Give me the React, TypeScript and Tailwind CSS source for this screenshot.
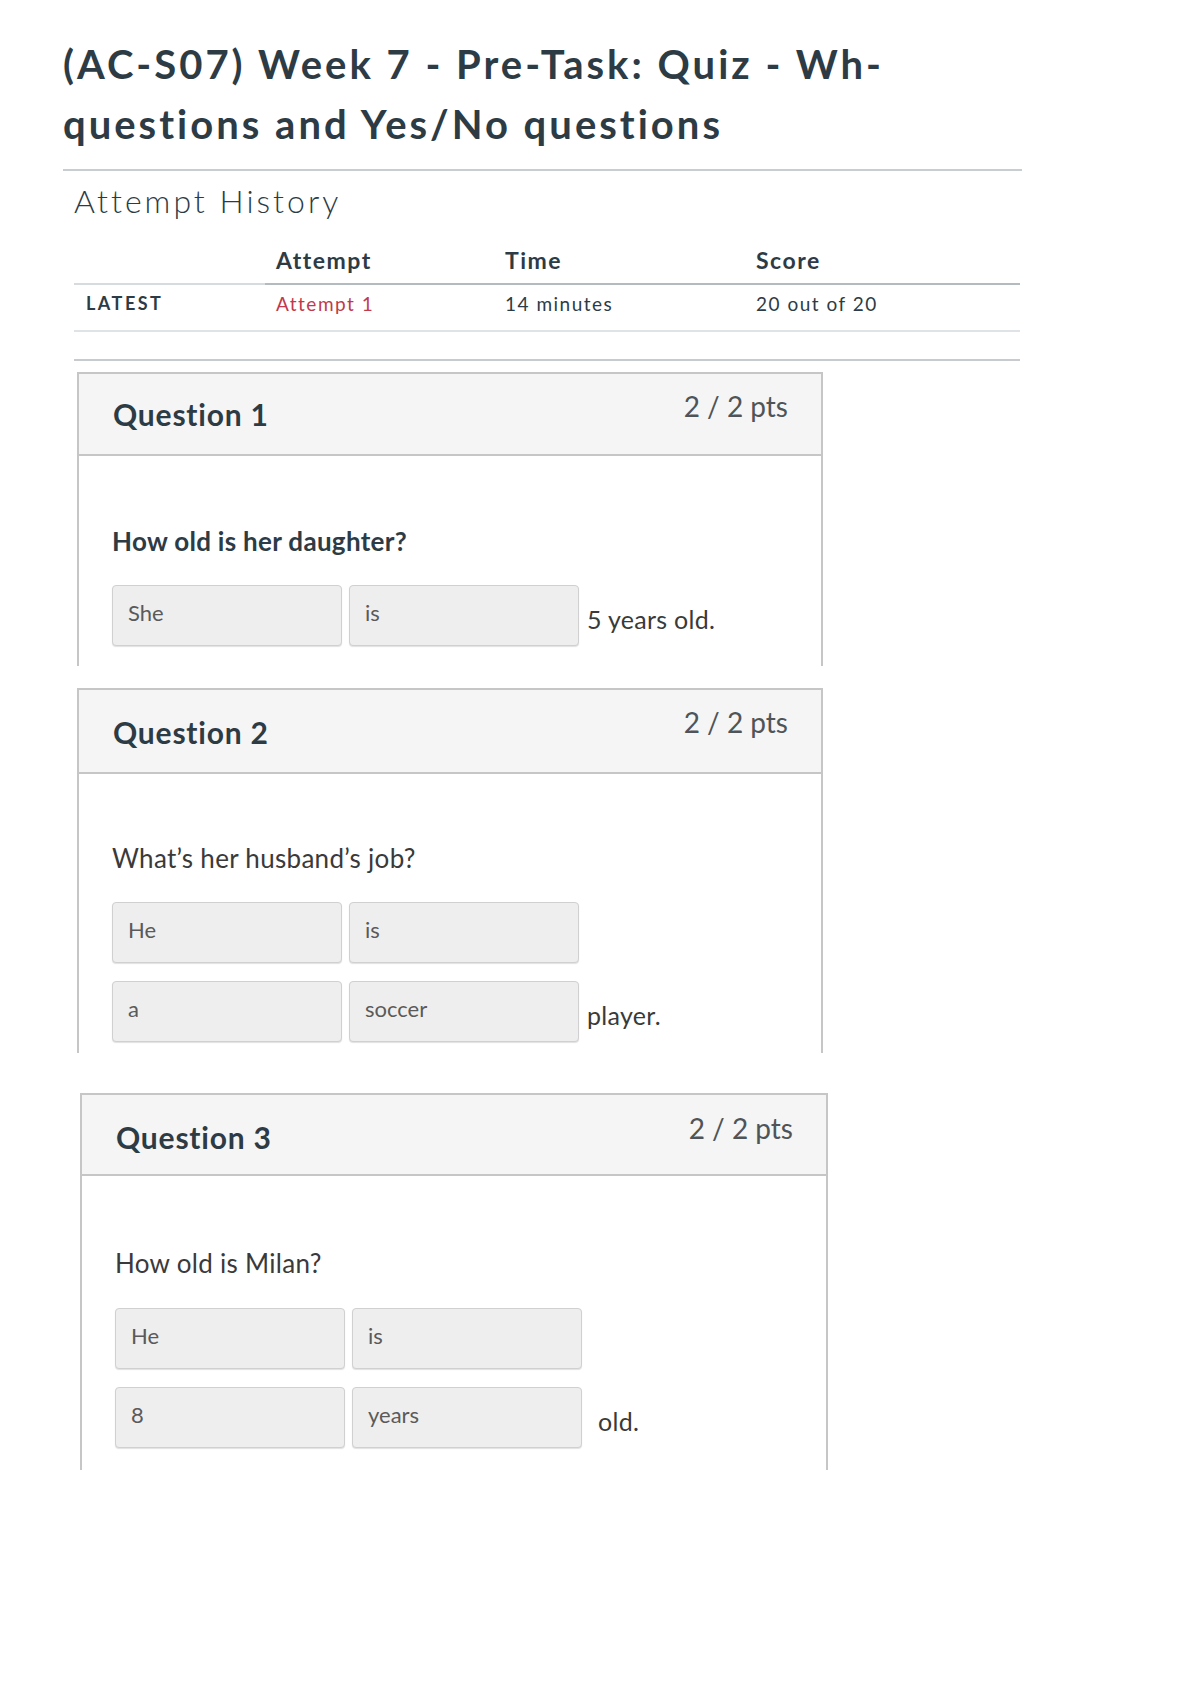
import React from "react";

type Blank = { text: string };

type CardProps = {
  num: number;
  question: string;
  boldQuestion?: boolean;
  rows: Blank[][];
  tail: string;
  wrap: string;
  header: string;
  titlePad: string;
  ptsPad: string;
  bodyPad: string;
  boxesGap: string;
  tailGap: string;
};

const Box = ({ text }: Blank) => (
  <div className="h-[61px] w-[230px] rounded-[4px] border-[1.5px] border-[#d0d0d0] bg-[#eeeeee] pl-[15px] pt-[14px] text-[22px] leading-[26px] text-[#5a5a5a] shadow-[0_1px_1px_rgba(0,0,0,0.12)]">
    {text}
  </div>
);

const QuestionCard = (p: CardProps) => {
  return (
    <div className={`border-x-2 border-t-2 border-[#c6c6c6] ${p.wrap}`}>
      {/* header */}
      <div className={`flex justify-between border-b-2 border-[#c6c6c6] bg-[#f5f5f5] pl-[34px] pr-[33px] ${p.header}`}>
        <div className={`text-[30px] font-bold leading-[36px] tracking-[0.8px] text-[#2d3b45] ${p.titlePad}`}>Question {p.num}</div>
        <div className={`text-[28px] leading-[34px] text-[#4f5458] ${p.ptsPad}`}>2 / 2 pts</div>
      </div>

      {/* body */}
      <div className={`pl-[33px] ${p.bodyPad}`}>
        <p className={`text-[26px] leading-[31px] tracking-[0.3px] ${p.boldQuestion ? "font-bold text-[#2d3b45]" : "text-[#3a3a3a]"}`}>{p.question}</p>
        <div className={`flex flex-col ${p.boxesGap}`}>
          {p.rows.map((row, i) => (
            <div key={i} className="flex items-end">
              <div className="flex gap-[7px]">
                {row.map((b) => (
                  <Box key={b.text} text={b.text} />
                ))}
              </div>
              {i === p.rows.length - 1 && (
                <span className={`mb-[12px] text-[25px] leading-[30px] tracking-[0.3px] text-[#3a3a3a] ${p.tailGap}`}>{p.tail}</span>
              )}
            </div>
          ))}
        </div>
      </div>
    </div>
  );
};

export default function App() {
  return (
    <div className="min-h-screen bg-white pl-[63px] pt-[34px] font-['Lato','Noto_Sans',sans-serif]">
      <h1 className="w-[980px] text-[40px] font-bold leading-[60px] tracking-[3px] text-[#2d3b45]">
        (AC-S07) Week 7 - Pre-Task: Quiz - Wh-
        <br />
        questions and Yes/No questions
      </h1>
      <div className="mt-[15px] w-[959px] border-t-2 border-[#c7cdd1]" />

      {/* Attempt history */}
      <div className="ml-[11px] w-[946px]">
        <h2 className="mt-[12px] text-[32px] font-light leading-[36px] tracking-[3px] text-[#2d3b45]">Attempt History</h2>
        <div className="mt-[28px] grid grid-cols-[191px_229px_251px_1fr] text-[23px] font-bold leading-[26px] tracking-[1.5px] text-[#2d3b45]">
          <div className="border-b-2 border-[#d6dbdf] pb-[10px]" />
          <div className="border-b-2 border-[#b3bbc1] pb-[10px] pl-[11px]">Attempt</div>
          <div className="border-b-2 border-[#b3bbc1] pb-[10px] pl-[11px]">Time</div>
          <div className="border-b-2 border-[#b3bbc1] pb-[10px] pl-[11px]">Score</div>
        </div>
        <div className="grid grid-cols-[191px_229px_251px_1fr] border-b-2 border-[#e0e3e6] pb-[15px] pt-[7px] text-[19px] leading-[23px] tracking-[1.5px] text-[#2d3b45]">
          <div className="pl-[12px] text-[18px] font-bold tracking-[2.5px]">LATEST</div>
          <div className="pl-[11px] text-[#c0394d]">Attempt 1</div>
          <div className="pl-[11px]">14 minutes</div>
          <div className="pl-[11px]">20 out of 20</div>
        </div>
        <div className="h-[29px] border-b-2 border-[#c8cbce]" />
      </div>

      <QuestionCard
        num={1}
        question="How old is her daughter?"
        boldQuestion
        rows={[[{ text: "She" }, { text: "is" }]]}
        tail="5 years old."
        wrap="ml-[14px] mt-[11px] w-[746px] pb-[20px]"
        header="h-[82px]"
        titlePad="pt-[22px]"
        ptsPad="pt-[15px]"
        bodyPad="pt-[70px]"
        boxesGap="mt-[28px] gap-[17px]"
        tailGap="ml-[8px]"
      />
      <QuestionCard
        num={2}
        question="What’s her husband’s job?"
        rows={[
          [{ text: "He" }, { text: "is" }],
          [{ text: "a" }, { text: "soccer" }],
        ]}
        tail="player."
        wrap="ml-[14px] mt-[22px] w-[746px] pb-[11px]"
        header="h-[84px]"
        titlePad="pt-[24px]"
        ptsPad="pt-[15px]"
        bodyPad="pt-[69px]"
        boxesGap="mt-[28px] gap-[18px]"
        tailGap="ml-[8px]"
      />
      <QuestionCard
        num={3}
        question="How old is Milan?"
        rows={[
          [{ text: "He" }, { text: "is" }],
          [{ text: "8" }, { text: "years" }],
        ]}
        tail="old."
        wrap="ml-[17px] mt-[40px] w-[748px] pb-[22px]"
        header="h-[81px]"
        titlePad="pt-[24px]"
        ptsPad="pt-[16px]"
        bodyPad="pt-[72px]"
        boxesGap="mt-[29px] gap-[18px]"
        tailGap="ml-[16px]"
      />
    </div>
  );
}
